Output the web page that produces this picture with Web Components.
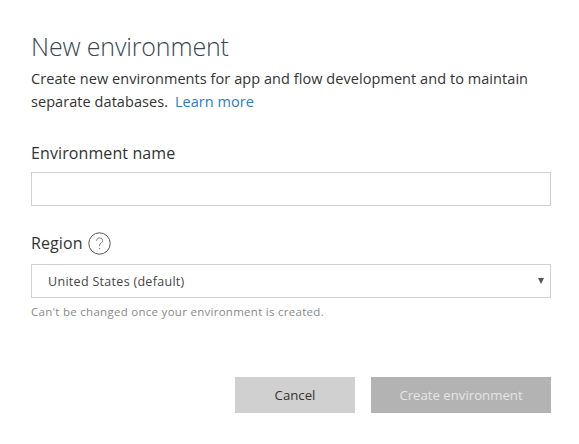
<!DOCTYPE html>
<html>
<head>
<meta charset="utf-8">
<title>New environment</title>
<style>
  html, body { margin: 0; background: #fff; }
  body { font-family: "Open Sans", "Noto Sans", sans-serif; color: #333; }
</style>
</head>
<body>
<new-environment-dialog></new-environment-dialog>

<script>
class FormLabel extends HTMLElement {
    constructor() {
        super();
        this.shadowDOM = this.attachShadow({mode: "open"});
    }
    connectedCallback() {
        this.shadowDOM.innerHTML = `
        <style>
        :host { display: flex; align-items: center; gap: 5px; height: 24px; font-size: 16px; letter-spacing: 0.1px; color: #333; }
        </style>
        <slot></slot>
        `;
    }
}

class HelpIcon extends HTMLElement {
    constructor() {
        super();
        this.shadowDOM = this.attachShadow({mode: "open"});
    }
    connectedCallback() {
        this.shadowDOM.innerHTML = `
        <style>
        :host { display: block; width: 23px; height: 23px; }
        svg { display: block; }
        </style>
        <svg width="23" height="23" viewBox="0 0 23 23" fill="none" stroke="#555">
            <circle cx="11.5" cy="11.5" r="10.7" stroke-width="1"/>
            <path d="M8.6 8.8c0-1.7 1.3-2.8 3-2.8s3 1.1 3 2.6c0 1.3-.8 1.9-1.7 2.6-.8.6-1.3 1.1-1.3 2.3v.7" stroke-width="1" stroke="#777"/>
            <circle cx="11.6" cy="16.6" r=".7" fill="#777" stroke="none"/>
        </svg>
        `;
    }
}

class TextField extends HTMLElement {
    constructor() {
        super();
        this.shadowDOM = this.attachShadow({mode: "open"});
    }
    connectedCallback() {
        this.shadowDOM.innerHTML = `
        <style>
        :host { display: block; }
        input { display: block; box-sizing: border-box; width: 100%; height: 34px; margin: 0; padding: 0 16px; border: 1px solid #d0d0d0; background: #fff; outline: 0; font: inherit; font-size: 13px; }
        </style>
        <input type="text">
        `;
    }
}

class SelectField extends HTMLElement {
    constructor() {
        super();
        this.shadowDOM = this.attachShadow({mode: "open"});
    }
    connectedCallback() {
        this.shadowDOM.innerHTML = `
        <style>
        :host { display: flex; box-sizing: border-box; align-items: center; justify-content: space-between; height: 34px; padding: 1px 6px 0 16px; border: 1px solid #d0d0d0; background: #fff; font-size: 12.5px; letter-spacing: 0.3px; color: #444; }
        i { display: block; width: 0; height: 0; margin-top: -2px; border-style: solid; border-width: 6px 3.5px 0; border-color: #555 transparent transparent; }
        </style>
        <span><slot></slot></span>
        <i></i>
        `;
    }
}

class ActionButton extends HTMLElement {
    constructor() {
        super();
        this.shadowDOM = this.attachShadow({mode: "open"});
    }
    connectedCallback() {
        this.shadowDOM.innerHTML = `
        <style>
        :host { display: flex; align-items: center; justify-content: center; height: 36px; font-size: 13.2px; background: #d0d0d0; color: #333; }
        :host([primary]) { background: #b3b3b3; color: #e6e6e6; }
        </style>
        <slot></slot>
        `;
    }
}

class NewEnvironmentDialog extends HTMLElement {
    constructor() {
        super();
        this.shadowDOM = this.attachShadow({mode: "open"});
    }
    connectedCallback() {
        this.shadowDOM.innerHTML = `
        <style>
        :host { display: flex; flex-direction: column; box-sizing: border-box; width: 579px; height: 444px; padding: 29px 28px 31px 31px; }
        h1 { margin: 0; font-size: 25px; line-height: 34px; font-weight: 300; letter-spacing: -0.15px; color: #3a4652; }
        p { margin: 4px 0 0; font-size: 14.5px; line-height: 23px; letter-spacing: 0.06px; color: #333; }
        a { margin-left: 3px; color: #2e7cbf; text-decoration: none; }
        form-label { margin-top: 28px; margin-bottom: 7px; }
        form-label.region { margin-top: 25px; margin-bottom: 9px; }
        small { display: block; margin-top: 6px; font-size: 11.5px; line-height: 15px; letter-spacing: 0.28px; color: #8a8a8a; }
        .actions { display: flex; justify-content: flex-end; gap: 16px; margin-top: auto; }
        .actions action-button:first-child { width: 120px; }
        .actions action-button:last-child { width: 180px; }
        </style>
        <h1>New environment</h1>
        <p>Create new environments for app and flow development and to maintain<br>separate databases. <a href="#">Learn more</a></p>
        <form-label>Environment name</form-label>
        <text-field></text-field>
        <form-label class="region">Region <help-icon></help-icon></form-label>
        <select-field>United States (default)</select-field>
        <small>Can't be changed once your environment is created.</small>
        <div class="actions">
            <action-button>Cancel</action-button>
            <action-button primary>Create environment</action-button>
        </div>
        `;
    }
}

customElements.define("form-label", FormLabel);
customElements.define("help-icon", HelpIcon);
customElements.define("text-field", TextField);
customElements.define("select-field", SelectField);
customElements.define("action-button", ActionButton);
customElements.define("new-environment-dialog", NewEnvironmentDialog);
</script>
</body>
</html>
